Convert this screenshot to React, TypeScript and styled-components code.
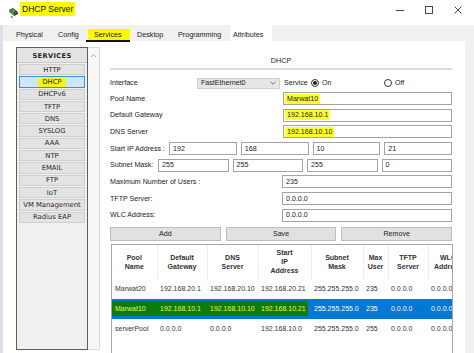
import React from "react";
import styled, { createGlobalStyle } from "styled-components";

const Global = createGlobalStyle`
  html, body { margin: 0; padding: 0; }
  body {
    width: 474px; height: 353px; overflow: hidden; background: #f0f0f0;
    font-family: "Liberation Sans", Arial, sans-serif; color: #1e1e1e;
  }
  * { box-sizing: border-box; }
`;

const Window = styled.div`
  width: 474px; height: 353px; display: flex; flex-direction: column;
  background: #f0f0f0; overflow: hidden;
`;

const TitleBar = styled.div`
  height: 25px; flex: none; background: #fff; display: flex; align-items: center;
  padding-left: 8px;
`;

const TitleText = styled.span`
  margin-left: 1px; font-size: 8.5px; line-height: 14px; background: #fff700;
  padding: 0 2px 0 2px; color: #111; border-radius: 1px; margin-top: -7px;
`;

const Controls = styled.div`
  margin-left: auto; display: flex; padding-right: 2px; margin-top: -5px;
`;

const CtlButton = styled.div`
  width: 29px; height: 14px; display: flex; align-items: center; justify-content: center;
`;

const Main = styled.div`
  flex: 1; display: flex; flex-direction: column; border-left: 3px solid #dce1e7;
  min-height: 0;
`;

const TabBar = styled.div`
  height: 16px; flex: none; display: flex; padding-left: 13px;
`;

const Tab = styled.div<{ $w: number; $white?: boolean }>`
  width: ${(p) => p.$w}px; display: flex; align-items: center;
  padding-left: ${(p) => (p.$white ? 3 : 0)}px; padding-top: 2px;
  font-size: 7.2px; color: #222; background: ${(p) => (p.$white ? "#fff" : "transparent")};
  white-space: nowrap;
`;

const TabMark = styled.span`
  position: relative; background: #fff700; padding: 1px 8px 1px 6px; margin-left: -6px;
  &::after {
    content: ""; position: absolute; left: -2px; right: 0; bottom: -2px; height: 2px; background: #111;
  }
`;

const Content = styled.div`
  flex: 1; display: flex; min-height: 0;
`;

const Panel = styled.div`
  width: 462px; background: #fff; display: flex; padding: 6px 0 0 13px;
`;

const Side = styled.div`
  display: flex; width: 84px; margin-bottom: 3px; flex: none;
`;

const ServiceList = styled.div`
  width: 72px; border: 1px solid #5e5e5e; background: #f0f0f0; padding: 0 2px;
  display: flex; flex-direction: column;
  font-family: "DejaVu Sans", Verdana, sans-serif;
`;

const ServiceHeader = styled.div`
  height: 15px; flex: none; display: flex; align-items: center; justify-content: center;
  font-size: 6.6px; font-weight: bold; letter-spacing: 0.4px; color: #222; padding-top: 1px;
  background: #e4e4e4; border-bottom: 1px solid #c9c9c9; margin: 0 -2px;
`;

const ServiceItem = styled.div<{ $active?: boolean }>`
  height: 11.3px; margin-top: 1px; flex: none; display: flex; align-items: center; justify-content: center;
  font-size: 6.8px; color: #2a2a2a;
  background: ${(p) => (p.$active ? "#cde6fa" : "#e3e3e3")};
  border: 1px solid ${(p) => (p.$active ? "#3c8fd6" : "#cfcfcf")};
`;

const ItemMark = styled.span`
  background: #f4f41c; padding: 1px 4px; line-height: 8px;
`;

const Scroll = styled.div`
  width: 12px; background: #f7f7f7; border: 1px solid #dadada; border-left: none;
  display: flex; flex-direction: column; align-items: center; padding-top: 5px;
`;

const Form = styled.div`
  margin-left: 10px; width: 342px; display: flex; flex-direction: column; padding-top: 9px;
  font-size: 7.1px;
`;

const FormTitle = styled.div`
  height: 14px; text-align: center; line-height: 10px; font-size: 7.2px; color: #222;
  border-bottom: 2px solid #dcdcdc;
`;

const Row = styled.div<{ $gap?: number; $mt?: number; $h?: number }>`
  height: ${(p) => p.$h ?? 13}px; flex: none; display: flex; align-items: center;
  gap: ${(p) => p.$gap ?? 0}px; margin-top: ${(p) => p.$mt ?? 3.7}px;
`;

const Label = styled.div<{ $w: number; $ml?: number }>`
  width: ${(p) => p.$w}px; flex: none; color: #222; white-space: nowrap;
  margin-left: ${(p) => p.$ml ?? 0}px;
`;

const Input = styled.div`
  flex: 1; height: 13px; border: 1px solid #a3a3a3; background: #fff;
  display: flex; align-items: center; padding-left: 3px; color: #222; font-size: 7.1px; white-space: nowrap;
  overflow: hidden;
`;

const InputMark = styled.span`
  background: #ffff2a; margin-left: -2px; padding: 0 2px 0 2px; line-height: 10px;
`;

const Select = styled.div`
  width: 83px; height: 11px; background: #e6e6e6; border: 1px solid #cfcfcf;
  display: flex; align-items: center; padding-left: 3px; padding-right: 3px; color: #222;
  justify-content: space-between;
`;

const RadioCircle = styled.span<{ $on?: boolean }>`
  width: 8px; height: 8px; border-radius: 50%; border: 1px solid #333; background: #fff;
  display: inline-flex; align-items: center; justify-content: center; flex: none;
  &::after {
    content: ""; width: 4px; height: 4px; border-radius: 50%;
    background: ${(p) => (p.$on ? "#222" : "transparent")};
  }
`;

const Radio = styled.div<{ $w: number }>`
  width: ${(p) => p.$w}px; display: flex; align-items: center; gap: 3px; flex: none;
`;

const Btn = styled.div`
  flex: 1; height: 14px; background: #e1e1e1; border: 1px solid #bdbdbd;
  display: flex; align-items: center; justify-content: center; color: #222;
`;

const TableBox = styled.div`
  margin-top: 3px; margin-left: 1px; width: 342px; flex: 1; min-height: 0;
  border: 1px solid #a7a7a7; border-bottom: none; overflow: hidden; background: #fff;
`;

const Grid = styled.table`
  border-collapse: collapse; table-layout: fixed; width: 356px;
  font-size: 7px; color: #333;
`;

const Th = styled.th`
  height: 34px; padding: 0; font-weight: bold; line-height: 9px; color: #333;
  text-align: center; vertical-align: middle; border-right: 1px solid #ececec; font-size: 7px;
  white-space: nowrap; overflow: hidden;
`;

const Tr = styled.tr<{ $sel?: boolean }>`
  height: 20px; background: ${(p) => (p.$sel ? "#0078d7" : "#fff")};
  color: ${(p) => (p.$sel ? "#fff" : "#333")};
`;

const Td = styled.td`
  padding: 0 0 0 3px; white-space: nowrap; overflow: hidden; vertical-align: middle;
`;

const TdFlush = styled.td`
  padding: 0; white-space: nowrap; overflow: hidden; vertical-align: middle;
`;

const Green = styled.span<{ $mr?: number }>`
  display: block; height: 15px; line-height: 15px; background: #0b7d10; color: #e6f45e;
  padding-left: 3px; margin-right: ${(p) => p.$mr ?? 0}px;
`;

const services = [
  "HTTP", "DHCP", "DHCPv6", "TFTP", "DNS", "SYSLOG", "AAA", "NTP", "EMAIL", "FTP", "IoT",
  "VM Management", "Radius EAP",
];

const cols = [45, 50, 51, 53, 52, 25, 40, 40];
const headers: React.ReactNode[] = [
  <>Pool<br />Name</>, <>Default<br />Gateway</>, <>DNS<br />Server</>, <>Start<br />IP<br />Address</>,
  <>Subnet<br />Mask</>, <>Max<br />User</>, <>TFTP<br />Server</>, <>WLC<br />Address</>,
];

const rows = [
  ["Marwat20", "192.168.20.1", "192.168.20.10", "192.168.20.21", "255.255.255.0", "235", "0.0.0.0", "0.0.0.0"],
  ["Marwat10", "192.168.10.1", "192.168.10.10", "192.168.10.21", "255.255.255.0", "235", "0.0.0.0", "0.0.0.0"],
  ["serverPool", "0.0.0.0", "0.0.0.0", "192.168.10.0", "255.255.255.0", "255", "0.0.0.0", "0.0.0.0"],
];

const AppIcon = () => (
  <svg width="11" height="12" viewBox="0 0 11 12">
    <path d="M1 3 L5 1 L10 5 L6 7 Z" fill="#3d4a3a" />
    <path d="M1 3 L6 7 L6 9 L1 5 Z" fill="#6c7a66" />
    <path d="M6 7 L10 5 L10 7 L6 9 Z" fill="#2a3328" />
    <path d="M3 3.2 L5 2.2 L7.5 4.3 L5.5 5.3 Z" fill="#4fbf3a" />
    <path d="M3 9 L4.5 11" stroke="#333" strokeWidth="1" />
  </svg>
);

export default function App() {
  return (
    <>
      <Global />
      <Window>
        <TitleBar>
          <AppIcon />
          <TitleText>DHCP Server</TitleText>
          <Controls>
            <CtlButton>
              <svg width="10" height="10" viewBox="0 0 10 10"><path d="M1 5.5 H9" stroke="#333" strokeWidth="0.9" /></svg>
            </CtlButton>
            <CtlButton>
              <svg width="10" height="10" viewBox="0 0 10 10"><rect x="1.5" y="1.5" width="7" height="7" fill="none" stroke="#333" strokeWidth="0.9" /></svg>
            </CtlButton>
            <CtlButton>
              <svg width="10" height="10" viewBox="0 0 10 10"><path d="M1.5 1.5 L8.5 8.5 M8.5 1.5 L1.5 8.5" stroke="#333" strokeWidth="0.9" /></svg>
            </CtlButton>
          </Controls>
        </TitleBar>
        <Main>
          <TabBar>
            <Tab $w={42}>Physical</Tab>
            <Tab $w={36}>Config</Tab>
            <Tab $w={43}><TabMark>Services</TabMark></Tab>
            <Tab $w={41}>Desktop</Tab>
            <Tab $w={52}>Programming</Tab>
            <Tab $w={42} $white>Attributes</Tab>
          </TabBar>
          <Content>
            <Panel>
              <Side>
                <ServiceList>
                  <ServiceHeader>SERVICES</ServiceHeader>
                  {services.map((s) => (
                    <ServiceItem key={s} $active={s === "DHCP"}>
                      {s === "DHCP" ? <ItemMark>{s}</ItemMark> : s}
                    </ServiceItem>
                  ))}
                </ServiceList>
                <Scroll>
                  <svg width="7" height="5" viewBox="0 0 7 5"><path d="M1 4 L3.5 1.5 L6 4" fill="none" stroke="#b0b0b0" strokeWidth="1" /></svg>
                </Scroll>
              </Side>
              <Form>
                <FormTitle>DHCP</FormTitle>
                <Row $mt={7} $h={12}>
                  <Label $w={87}>Interface</Label>
                  <Select>
                    <span>FastEthernet0</span>
                    <svg width="6" height="4" viewBox="0 0 6 4"><path d="M0.5 0.8 L3 3.2 L5.5 0.8" fill="none" stroke="#555" strokeWidth="0.8" /></svg>
                  </Select>
                  <Label $w={27} $ml={4}>Service</Label>
                  <Radio $w={73}><RadioCircle $on />On</Radio>
                  <Radio $w={40}><RadioCircle />Off</Radio>
                </Row>
                <Row $mt={3}>
                  <Label $w={173}>Pool Name</Label>
                  <Input><InputMark>Marwat10</InputMark></Input>
                </Row>
                <Row>
                  <Label $w={173}>Default Gateway</Label>
                  <Input><InputMark>192.168.10.1</InputMark></Input>
                </Row>
                <Row>
                  <Label $w={173}>DNS Server</Label>
                  <Input><InputMark>192.168.10.10</InputMark></Input>
                </Row>
                <Row $gap={4}>
                  <Label $w={55}>Start IP Address :</Label>
                  <Input>192</Input>
                  <Input>168</Input>
                  <Input>10</Input>
                  <Input>21</Input>
                </Row>
                <Row $gap={4}>
                  <Label $w={44}>Subnet Mask:</Label>
                  <Input>255</Input>
                  <Input>255</Input>
                  <Input>255</Input>
                  <Input>0</Input>
                </Row>
                <Row>
                  <Label $w={172}>Maximum Number of Users :</Label>
                  <Input>235</Input>
                </Row>
                <Row>
                  <Label $w={172}>TFTP Server:</Label>
                  <Input>0.0.0.0</Input>
                </Row>
                <Row>
                  <Label $w={172}>WLC Address:</Label>
                  <Input>0.0.0.0</Input>
                </Row>
                <Row $gap={5} $mt={5} $h={14}>
                  <Btn>Add</Btn>
                  <Btn>Save</Btn>
                  <Btn>Remove</Btn>
                </Row>
                <TableBox>
                  <Grid>
                    <colgroup>
                      {cols.map((w, i) => <col key={i} style={{ width: w }} />)}
                    </colgroup>
                    <thead>
                      <tr>{headers.map((h, i) => <Th key={i}>{h}</Th>)}</tr>
                    </thead>
                    <tbody>
                      {rows.map((r, ri) => (
                        <Tr key={ri} $sel={ri === 1}>
                          {r.map((c, ci) =>
                            ri === 1 && ci < 4 ? (
                              <TdFlush key={ci}><Green $mr={ci === 3 ? 3 : 0}>{c}</Green></TdFlush>
                            ) : (
                              <Td key={ci}>{c}</Td>
                            )
                          )}
                        </Tr>
                      ))}
                    </tbody>
                  </Grid>
                </TableBox>
              </Form>
            </Panel>
          </Content>
        </Main>
      </Window>
    </>
  );
}
